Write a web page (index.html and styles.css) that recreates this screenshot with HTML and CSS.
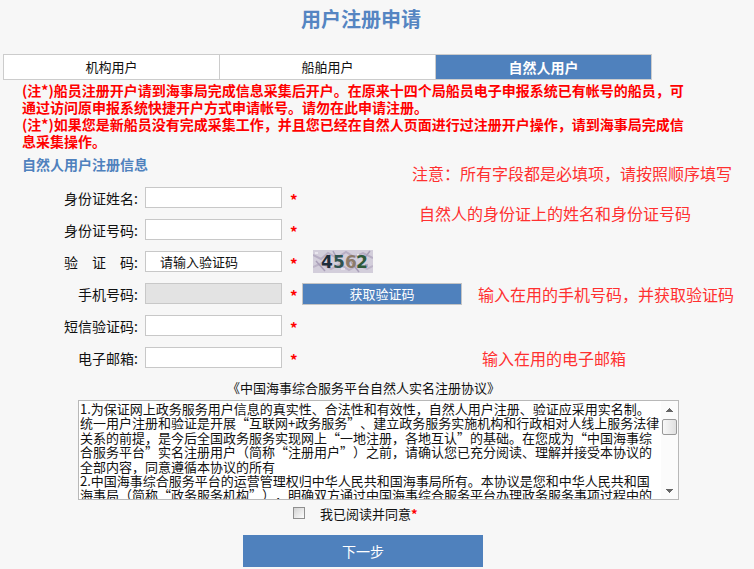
FILE: index.html
```html
<!DOCTYPE html>
<html>
<head>
<meta charset="UTF-8">
<title>用户注册申请</title>
<link rel="stylesheet" href="styles.css">
</head>
<body>
<div class="page">
	<h1 class="title">用户注册申请</h1>

	<div class="tabs">
		<a class="tab">机构用户</a>
		<a class="tab">船舶用户</a>
		<a class="tab tab_on">自然人用户</a>
	</div>

	<div class="notice">
		<p>(注*)船员注册开户请到海事局完成信息采集后开户。在原来十四个局船员电子申报系统已有帐号的船员，可通过访问原申报系统快捷开户方式申请帐号。请勿在此申请注册。</p>
		<p>(注*)如果您是新船员没有完成采集工作，并且您已经在自然人页面进行过注册开户操作，请到海事局完成信息采集操作。</p>
	</div>

	<h2 class="sub_title">自然人用户注册信息</h2>

	<div class="form">
		<div class="row">
			<label class="lbl">身份证姓名:</label>
			<input class="txt" type="text">
			<span class="star">*</span>
		</div>
		<div class="row">
			<label class="lbl">身份证号码:</label>
			<input class="txt" type="text">
			<span class="star">*</span>
		</div>
		<div class="row">
			<label class="lbl">验　证　码:</label>
			<input class="txt" type="text" placeholder="请输入验证码">
			<span class="star">*</span>
			<span class="captcha">
				<svg width="60" height="23" viewBox="0 0 60 23">
					<rect width="60" height="23" fill="#d3cedb"/>
					<path d="M0 5 L8 9 L15 3 L24 8 L33 2 L41 7 L50 3 L60 8" stroke="#b7aec4" stroke-width="2" fill="none"/>
					<path d="M0 17 L9 13 L18 19 L27 14 L36 20 L45 15 L54 19 L60 16" stroke="#bdb4c8" stroke-width="2" fill="none"/>
					<path d="M3 11 L12 21 M20 1 L26 12 M38 12 L46 22 M50 10 L57 1" stroke="#a99fb8" stroke-width="1.5"/>
					<rect x="2" y="2" width="3" height="2" fill="#e9e6ee"/>
					<rect x="28" y="18" width="4" height="2" fill="#e6e2ec"/>
					<rect x="52" y="14" width="3" height="3" fill="#b2a8c0"/>
					<rect x="44" y="4" width="2" height="2" fill="#ece9f0"/>
					<text x="8" y="18" font-family="DejaVu Sans" font-size="17" font-weight="bold" fill="#1e2d3b">4</text>
					<text x="20" y="18" font-family="DejaVu Sans" font-size="17" font-weight="bold" fill="#2f5350">5</text>
					<text x="32" y="18" font-family="DejaVu Sans" font-size="17" font-weight="bold" fill="#8c7b6a">6</text>
					<text x="43" y="18" font-family="DejaVu Sans" font-size="17" font-weight="bold" fill="#2e5a3a">2</text>
				</svg>
			</span>
		</div>
		<div class="row">
			<label class="lbl">手机号码:</label>
			<input class="txt" type="text" disabled>
			<span class="star">*</span>
			<a class="btn_code">获取验证码</a>
		</div>
		<div class="row">
			<label class="lbl">短信验证码:</label>
			<input class="txt" type="text">
			<span class="star">*</span>
		</div>
		<div class="row">
			<label class="lbl">电子邮箱:</label>
			<input class="txt" type="text">
			<span class="star">*</span>
		</div>
	</div>

	<!-- 说明文字 -->
	<div class="tip tip1">注意：所有字段都是必填项，请按照顺序填写</div>
	<div class="tip tip2">自然人的身份证上的姓名和身份证号码</div>
	<div class="tip tip3">输入在用的手机号码，并获取验证码</div>
	<div class="tip tip4">输入在用的电子邮箱</div>

	<div class="agree_title">《中国海事综合服务平台自然人实名注册协议》</div>
	<div class="agree_box">
		<div class="agree_text">
			<p>1.为保证网上政务服务用户信息的真实性、合法性和有效性，自然人用户注册、验证应采用实名制。统一用户注册和验证是开展<span class="q">“</span>互联网+政务服务<span class="q">”</span>、建立政务服务实施机构和行政相对人线上服务法律关系的前提，是今后全国政务服务实现网上<span class="q">“</span>一地注册，各地互认<span class="q">”</span>的基础。在您成为<span class="q">“</span>中国海事综合服务平台<span class="q">”</span>实名注册用户（简称<span class="q">“</span>注册用户<span class="q">”</span>）之前，请确认您已充分阅读、理解并接受本协议的全部内容，同意遵循本协议的所有</p>
			<p>2.中国海事综合服务平台的运营管理权归中华人民共和国海事局所有。本协议是您和中华人民共和国海事局（简称<span class="q">“</span>政务服务机构<span class="q">”</span>），明确双方通过中国海事综合服务平台办理政务服务事项过程中的权利义务关系的约定。</p>
			<p>3.注册用户应当提供真实、准确、完整的个人身份信息，并在信息发生变化时及时更新。因注册用户提供的信息不真实、不准确或不完整而导致的一切后果，由注册用户自行承担。</p>
			<p>4.注册用户应妥善保管本人的账号和密码，不得将账号转让、出借或授权他人使用。因注册用户保管不善造成的损失，由注册用户自行承担。</p>
			<p>5.政务服务机构依法保护注册用户的个人信息，未经注册用户同意，不得向任何第三方公开或提供，法律法规另有规定的除外。</p>
		</div>
		<div class="scroll_bar">
			<span class="sb_up"></span>
			<span class="sb_track"><span class="sb_thumb"></span></span>
			<span class="sb_down"></span>
		</div>
	</div>

	<div class="agree_check">
		<input type="checkbox" class="chk">
		<span class="chk_text">我已阅读并同意</span><span class="star_s">*</span>
	</div>

	<a class="btn_next">下一步</a>
</div>
</body>
</html>
```

FILE: styles.css
```css
*{
	margin:0;
	padding:0;
	box-sizing:border-box;
}
body{
	background-color:#f7f7f7;
	font-family:"Noto Sans CJK SC", "Noto Sans", sans-serif;
	color:#222;
	text-spacing-trim:space-all;
}
.page{
	position:relative;
	width:716px;
	margin-left:3px;
}
.title{
	padding-top:7px;
	font-size:20px;
	line-height:24px;
	font-weight:bold;
	color:#5585c2;
	text-align:center;
}
.tabs{
	display:flex;
	width:649px;
	height:26px;
	margin-top:23px;
	border:1px solid #ccc;
	background-color:#fff;
}
.tab{
	flex:1;
	font-size:13px;
	line-height:24px;
	text-align:center;
	color:#111;
	border-left:1px solid #ccc;
}
.tab:first-child{
	border-left:none;
}
.tab_on{
	background-color:#4f81bd;
	color:#fff;
	font-size:14px;
	font-weight:bold;
}
.notice{
	width:668px;
	margin-left:19px;
	padding-top:2px;
	font-size:14px;
	line-height:17px;
	font-weight:bold;
	color:#f00;
}
.sub_title{
	margin-left:19px;
	margin-top:6px;
	font-size:14px;
	line-height:17px;
	font-weight:bold;
	color:#4f81bd;
}
.form{
	margin-top:14px;
}
.row{
	display:flex;
	align-items:center;
	height:21px;
	margin-bottom:11px;
}
.lbl{
	width:135px;
	text-align:right;
	font-size:14px;
	color:#111;
}
.txt{
	width:137px;
	height:21px;
	margin-left:7px;
	border:1px solid #c8c8c8;
	background-color:#fff;
	font-family:inherit;
	font-size:13px;
	padding-left:14px;
	outline:none;
}
.txt::placeholder{
	color:#111;
}
.txt:disabled{
	background-color:#e3e3e3;
}
.star{
	width:12px;
	margin-left:8px;
	color:#f00;
	font-size:15px;
	font-weight:bold;
	line-height:21px;
	padding-top:4px;
}
.captcha{
	display:block;
	width:60px;
	height:23px;
	margin-left:11px;
}
.captcha svg{
	display:block;
}
.btn_code{
	display:block;
	width:160px;
	height:22px;
	border:1px solid #c4c4c4;
	background-color:#4f81bd;
	color:#fff;
	font-size:13px;
	line-height:20px;
	text-align:center;
	cursor:pointer;
}
.tip{
	position:absolute;
	font-size:16px;
	line-height:20px;
	color:#ff3030;
	white-space:nowrap;
}
.tip1{ top:163px; left:409px; }
.tip2{ top:203px; left:416px; }
.tip3{ top:284px; left:475px; }
.tip4{ top:348px; left:479px; }
.agree_title{
	padding-left:224px;
	font-size:13px;
	line-height:18px;
	color:#111;
}
.agree_box{
	display:flex;
	width:601px;
	height:100px;
	margin-top:3px;
	margin-left:75px;
	border:1px solid #b8b8b8;
	background-color:#fff;
}
.agree_text{
	flex:1;
	overflow:hidden;
	padding:1px 0 0 1px;
	font-size:13px;
	line-height:14.4px;
	color:#111;
}
.q{
	font-feature-settings:"fwid";
}
.scroll_bar{
	display:flex;
	flex-direction:column;
	width:17px;
	background-color:#fbfbfb;
}
.sb_up,
.sb_down{
	display:block;
	height:17px;
	background-repeat:no-repeat;
	background-size:7px 4px;
	background-position:center;
}
.sb_up{
	background-image:conic-gradient(from 139deg at 50% 0%, #666 0 82deg, transparent 0);
}
.sb_down{
	background-image:conic-gradient(from -41deg at 50% 100%, #666 0 82deg, transparent 0);
}
.sb_track{
	flex:1;
	display:block;
	padding:1px;
}
.sb_thumb{
	display:block;
	height:16px;
	border:1px solid #999;
	border-radius:2px;
	background:linear-gradient(to right, #f8f8f8, #e0e0e0);
}
.agree_check{
	display:flex;
	align-items:center;
	margin-top:5px;
	padding-left:290px;
	height:16px;
}
.chk{
	appearance:none;
	-webkit-appearance:none;
	width:12px;
	height:12px;
	border:1px solid #8f8f8f;
	background:linear-gradient(135deg, #d2d2d2, #fdfdfd);
}
.chk_text{
	margin-left:15px;
	font-size:13px;
	color:#111;
}
.star_s{
	color:#f00;
	font-size:13px;
	font-weight:bold;
}
.btn_next{
	display:block;
	width:240px;
	height:32px;
	margin-top:14px;
	margin-left:240px;
	background-color:#4f81bd;
	color:#fff;
	font-size:14px;
	line-height:32px;
	text-align:center;
	cursor:pointer;
}
```
